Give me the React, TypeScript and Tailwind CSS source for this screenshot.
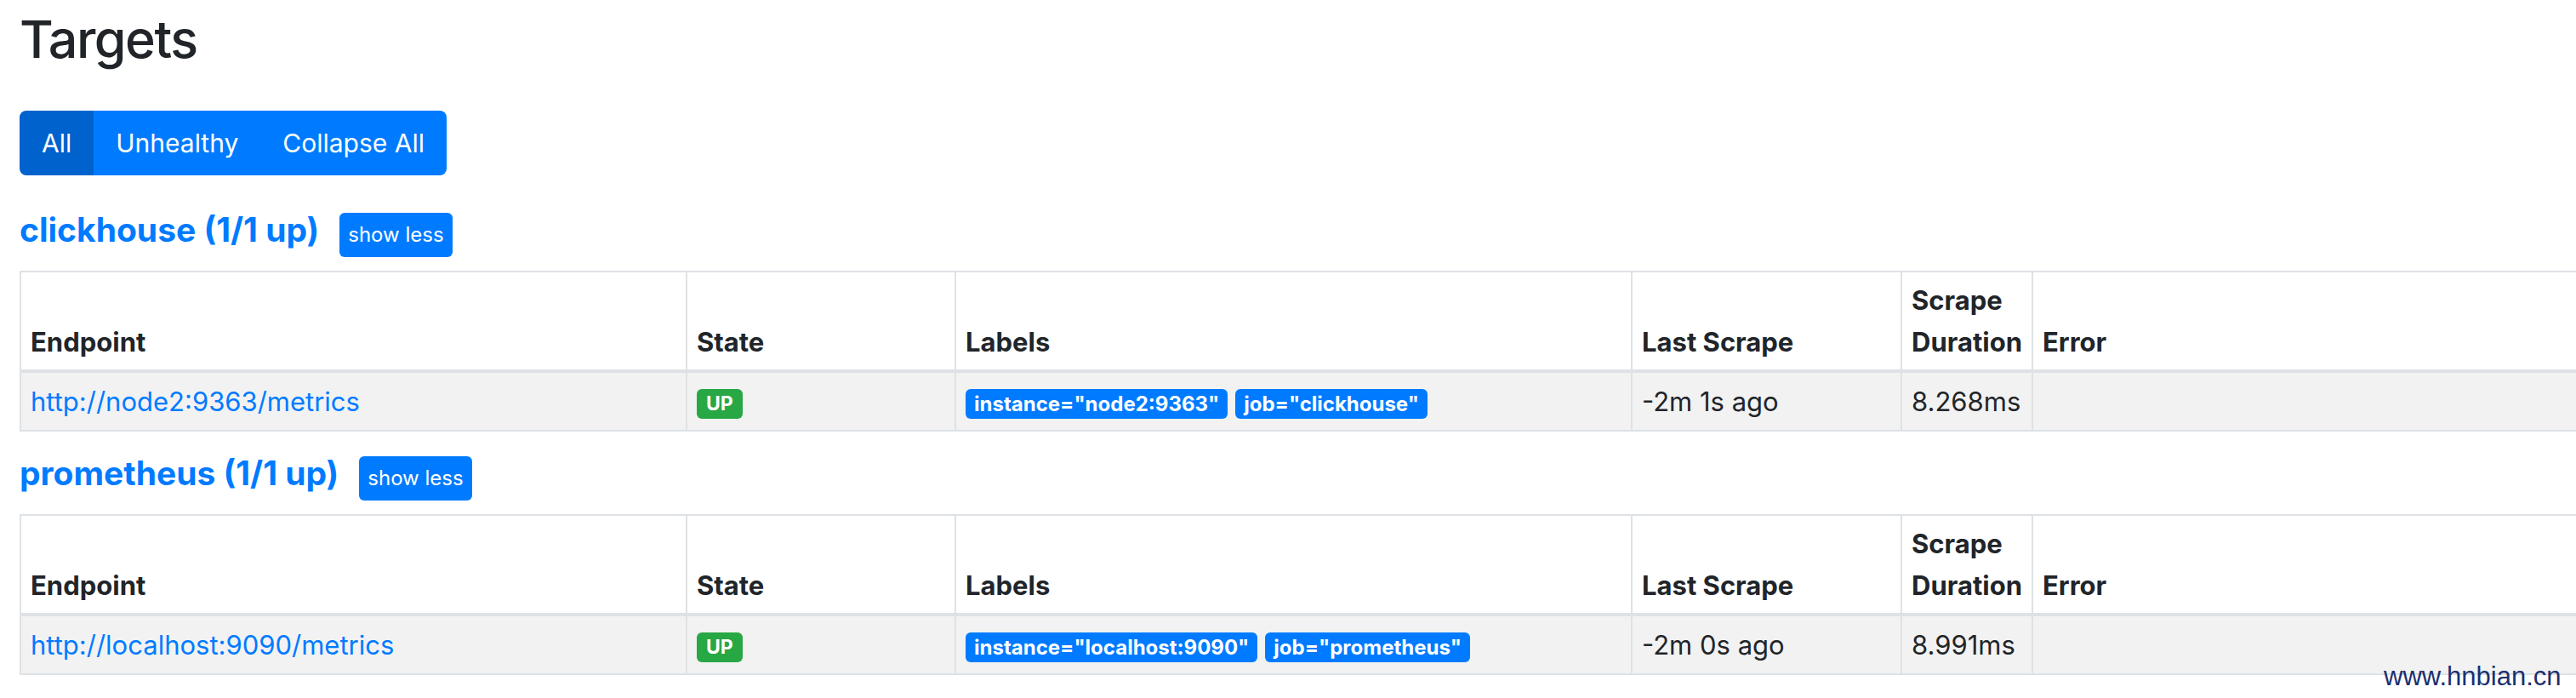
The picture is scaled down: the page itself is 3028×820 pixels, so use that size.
import React from 'react';

type Target = {
  job: string;
  endpoint: string;
  labels: string[];
  lastScrape: string;
  duration: string;
};

const targets: Target[] = [
  {
    job: 'clickhouse',
    endpoint: 'http://node2:9363/metrics',
    labels: ['instance="node2:9363"', 'job="clickhouse"'],
    lastScrape: '-2m 1s ago',
    duration: '8.268ms',
  },
  {
    job: 'prometheus',
    endpoint: 'http://localhost:9090/metrics',
    labels: ['instance="localhost:9090"', 'job="prometheus"'],
    lastScrape: '-2m 0s ago',
    duration: '8.991ms',
  },
];

const th = 'border-2 border-b-4 border-[#dee2e6] px-[11px] py-[8px] text-left align-bottom font-bold';
const td = 'border-2 border-[#dee2e6] px-[11px] py-[9px] align-top';

const TargetPool: React.FC<{ t: Target; first?: boolean }> = ({ t, first }) => (
  <div className={first ? 'mt-[44px]' : 'mt-[29px]'}>
    <div className="flex items-start h-[52px]">
      <span className="text-[39px] font-bold text-[#007bff] leading-[40px]">
        {t.job} (1/1 up)
      </span>
      <button className="ml-[24px] h-[52px] px-[10px] rounded-[6px] bg-[#007bff] text-white text-[24px] leading-[52px]">
        show less
      </button>
    </div>
    <table className="mt-[16px] w-[3010px] table-fixed border-collapse text-[31px] leading-[49px] text-[#212529]">
      <colgroup>
        <col className="w-[783px]" />
        <col className="w-[316px]" />
        <col className="w-[795px]" />
        <col className="w-[317px]" />
        <col className="w-[154px]" />
        <col />
      </colgroup>
      <thead>
        <tr>
          <th className={th}>Endpoint</th>
          <th className={th}>State</th>
          <th className={th}>Labels</th>
          <th className={th}>Last Scrape</th>
          <th className={th}>Scrape Duration</th>
          <th className={th}>Error</th>
        </tr>
      </thead>
      <tbody>
        <tr className="bg-[#f2f2f2]">
          <td className={td}>
            <a className="text-[#007bff]">{t.endpoint}</a>
          </td>
          <td className={td}>
            <div className="flex items-center h-[49px] pt-[5px]">
              <span className="inline-block h-[35px] px-[11px] rounded-[6px] bg-[#28a745] text-white text-[23px] font-bold leading-[35px]">
                UP
              </span>
            </div>
          </td>
          <td className={td}>
            <div className="flex items-center gap-[9px] h-[49px] pt-[5px]">
              {t.labels.map(l => (
                <span
                  key={l}
                  className="inline-block h-[35px] px-[10px] rounded-[6px] bg-[#007bff] text-white text-[24px] font-bold leading-[35px]"
                >
                  {l}
                </span>
              ))}
            </div>
          </td>
          <td className={td}>{t.lastScrape}</td>
          <td className={td}>{t.duration}</td>
          <td className={td}></td>
        </tr>
      </tbody>
    </table>
  </div>
);

const App: React.FC = () => {
  return (
    <div className="relative min-h-screen bg-white overflow-hidden font-['Inter',sans-serif]">
      <div className="pl-[23px] pt-[8px]">
        <h1 className="text-[61px] leading-[77px] font-medium text-[#212529] tracking-[-0.025em]">Targets</h1>
        <div className="mt-[45px] inline-flex h-[76px] rounded-[8px] overflow-hidden text-[30px] text-white">
          <button className="px-[26px] bg-[#0062cc]">All</button>
          <button className="px-[26px] bg-[#007bff]">Unhealthy</button>
          <button className="px-[26px] bg-[#007bff]">Collapse All</button>
        </div>
        {targets.map((t, i) => (
          <TargetPool key={t.job} t={t} first={i === 0} />
        ))}
      </div>
      <div className="absolute left-[2802px] top-[772px] text-[31px] text-[#1c2f6e] font-['Liberation_Sans',sans-serif]">
        www.hnbian.cn
      </div>
    </div>
  );
};

export default App;
